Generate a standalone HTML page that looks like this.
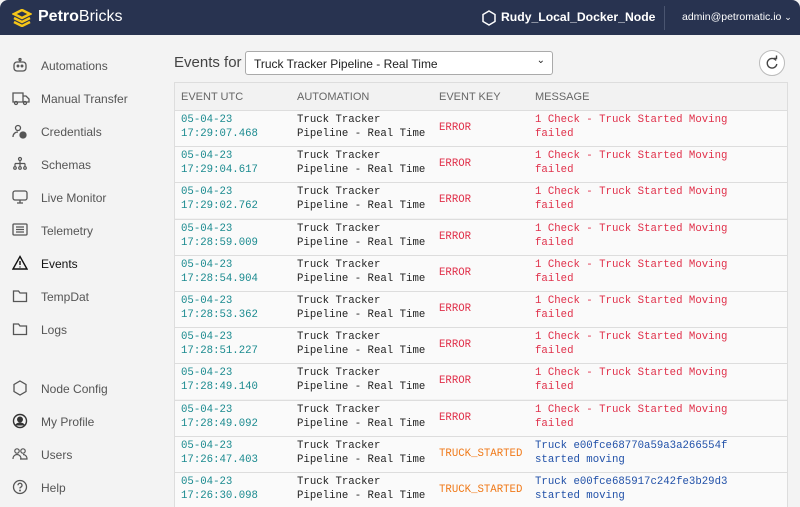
<!DOCTYPE html><html><head><style>
*{margin:0;padding:0;box-sizing:border-box}
html,body{width:800px;height:507px;overflow:hidden}
body{background:#f3f3f3;font-family:"Liberation Sans",sans-serif;position:relative}
.top{position:absolute;left:0;top:0;width:800px;height:35px;background:#283350;border-radius:8px 8px 0 0}
.logo{position:absolute;left:38px;top:8px;color:#fff;font-size:16px}
.node{position:absolute;left:501px;top:10px;color:#fff;font-weight:bold;font-size:12.2px}
.sep{position:absolute;left:664px;top:6px;width:1px;height:24px;background:#4a5570}
.admin{position:absolute;left:682px;top:11px;color:#fff;font-size:10.5px}
.nav div{position:absolute;left:41px;font-size:12px;color:#555}
.nav svg{position:absolute;left:-29px;top:-2px}
.ev{position:absolute;left:174px;top:54px;font-size:15px;color:#444}
.sel{position:absolute;left:245px;top:51px;width:308px;height:24px;background:#fff;border:1px solid #aaa;border-radius:3px;font-size:12px;padding:5px 8px;color:#222}
.ref{position:absolute;left:759px;top:50px;width:26px;height:26px;border:1px solid #bbb;border-radius:50%;background:#fff}
.tbl{position:absolute;left:174px;top:82px;width:614px;height:440px;border:1px solid #ddd;background:#f2f2f2}
.hd{position:absolute;top:8px;font-size:11px;color:#666}
.row{position:absolute;left:0;width:612px;height:36px;background:#fafafa;border-top:1px solid #ddd;font-family:"Liberation Mono",monospace;font-size:10.7px;line-height:13.5px}
.row div{position:absolute;top:3px}
.t{left:6px;color:#1a8a8f}.a{left:122px;color:#222}.k{left:264px;top:11px!important}.m{left:360px}
.er{color:#e0304a}.tr{color:#f07a1a}.bl{color:#2050a8}
</style></head><body>
<div class="top">
<svg style="position:absolute;left:12px;top:9px" width="20" height="18" viewBox="0 0 20 18"><path d="M10 1 L18 5 L10 9 L2 5Z" fill="none" stroke="#f5c518" stroke-width="2.5"/><path d="M2 9 L10 13 L18 9 M2 13 L10 17 L18 13" fill="none" stroke="#f5c518" stroke-width="2.5"/></svg>
<div class="logo"><b>Petro</b>Bricks</div>
<svg style="position:absolute;left:482px;top:10px" width="14" height="16" viewBox="0 0 14 16"><path d="M7 1 L13 4.5 V11.5 L7 15 L1 11.5 V4.5Z" fill="none" stroke="#fff" stroke-width="1.5"/></svg>
<div class="node">Rudy_Local_Docker_Node</div><div class="sep"></div>
<div class="admin">admin@petromatic.io <span style="font-size:9px">&#8964;</span></div>
</div>
<div class="nav">
<div style="top:59px"><svg width="16" height="16" viewBox="0 0 16 16" fill="none" stroke="#555" stroke-width="1.3"><rect x="2" y="5" width="12" height="9" rx="3"/><circle cx="8" cy="2.5" r="1"/><line x1="8" y1="3.5" x2="8" y2="5"/><circle cx="6" cy="9" r=".8"/><circle cx="10" cy="9" r=".8"/></svg>Automations</div>
<div style="top:92px"><svg width="18" height="16" viewBox="0 0 18 16" fill="none" stroke="#555" stroke-width="1.3"><path d="M1 3h10v9H1z M11 6h3l3 3v3h-6"/><circle cx="4" cy="13" r="1.5"/><circle cx="13" cy="13" r="1.5"/></svg>Manual Transfer</div>
<div style="top:125px"><svg width="16" height="16" viewBox="0 0 16 16" fill="none" stroke="#555" stroke-width="1.3"><circle cx="6" cy="5" r="2.5"/><path d="M1 14c0-3 2-5 5-5"/><circle cx="11" cy="12" r="3" fill="#555"/></svg>Credentials</div>
<div style="top:158px"><svg width="16" height="16" viewBox="0 0 16 16" fill="none" stroke="#555" stroke-width="1.2"><circle cx="8" cy="3" r="1.5"/><path d="M8 4.5v3M3 7.5h10M3 7.5v3M8 7.5v3M13 7.5v3"/><circle cx="3" cy="12" r="1.3"/><circle cx="8" cy="12" r="1.3"/><circle cx="13" cy="12" r="1.3"/></svg>Schemas</div>
<div style="top:191px"><svg width="16" height="16" viewBox="0 0 16 16" fill="none" stroke="#555" stroke-width="1.3"><rect x="1" y="2" width="14" height="9" rx="2"/><path d="M5 14h6M8 11v3"/></svg>Live Monitor</div>
<div style="top:224px"><svg width="16" height="16" viewBox="0 0 16 16" fill="none" stroke="#555" stroke-width="1.3"><rect x="1" y="2" width="14" height="11" rx="1"/><path d="M4 5h8M4 7.5h8M4 10h8"/></svg>Telemetry</div>
<div style="top:257px;color:#111"><svg width="16" height="16" viewBox="0 0 16 16" fill="none" stroke="#111" stroke-width="1.4"><path d="M8 1.5L15 14H1z"/><path d="M8 6v4M8 11.5v1"/></svg>Events</div>
<div style="top:290px"><svg width="16" height="16" viewBox="0 0 16 16" fill="none" stroke="#555" stroke-width="1.3"><path d="M1.5 3h5l1.5 2h6.5v8.5h-13z"/></svg>TempDat</div>
<div style="top:323px"><svg width="16" height="16" viewBox="0 0 16 16" fill="none" stroke="#555" stroke-width="1.3"><path d="M1.5 3h5l1.5 2h6.5v8.5h-13z"/></svg>Logs</div>
<div style="top:382px"><svg width="16" height="16" viewBox="0 0 16 16" fill="none" stroke="#555" stroke-width="1.3"><path d="M8 1L14 4.5V11.5L8 15L2 11.5V4.5Z"/></svg>Node Config</div>
<div style="top:415px"><svg width="16" height="16" viewBox="0 0 16 16" fill="none" stroke="#333" stroke-width="1.4"><circle cx="8" cy="8" r="6.5"/><circle cx="8" cy="6.5" r="2.3" fill="#333"/><path d="M3.5 12.5c2-3 7-3 9 0" fill="#333"/></svg>My Profile</div>
<div style="top:448px"><svg width="16" height="16" viewBox="0 0 16 16" fill="none" stroke="#555" stroke-width="1.2"><circle cx="5" cy="5" r="2.2"/><circle cx="11" cy="5" r="2.2"/><path d="M1 13c0-3 2-4.5 4-4.5s4 1.5 4 4.5M8 13h7c0-3-2-4.5-4-4.5"/></svg>Users</div>
<div style="top:481px"><svg width="16" height="16" viewBox="0 0 16 16" fill="none" stroke="#555" stroke-width="1.3"><circle cx="8" cy="8" r="6.5"/><path d="M6 6.3a2 2 0 1 1 2.5 1.9c-.5.2-.5.6-.5 1.3"/><circle cx="8" cy="11.5" r=".4"/></svg>Help</div>
</div>
<div class="ev">Events for</div>
<div class="sel">Truck Tracker Pipeline - Real Time<span style="position:absolute;right:7px;top:3px;font-size:10px">&#8964;</span></div>
<div class="ref"><svg width="24" height="24" viewBox="0 0 24 24" fill="none" stroke="#444" stroke-width="1.4"><path d="M16 9.5A4.8 4.8 0 1 0 16.8 13"/><path d="M13.5 7.5h3v-3" /></svg></div>
<div class="tbl">
<div class="hd" style="left:6px">EVENT UTC</div><div class="hd" style="left:122px">AUTOMATION</div><div class="hd" style="left:264px">EVENT KEY</div><div class="hd" style="left:360px">MESSAGE</div>
<div class="row" style="top:27px"><div class="t">05-04-23<br>17:29:07.468</div><div class="a">Truck Tracker<br>Pipeline - Real Time</div><div class="k er">ERROR</div><div class="m er">1 Check - Truck Started Moving<br>failed</div></div>
<div class="row" style="top:63px"><div class="t">05-04-23<br>17:29:04.617</div><div class="a">Truck Tracker<br>Pipeline - Real Time</div><div class="k er">ERROR</div><div class="m er">1 Check - Truck Started Moving<br>failed</div></div>
<div class="row" style="top:99px"><div class="t">05-04-23<br>17:29:02.762</div><div class="a">Truck Tracker<br>Pipeline - Real Time</div><div class="k er">ERROR</div><div class="m er">1 Check - Truck Started Moving<br>failed</div></div>
<div class="row" style="top:136px"><div class="t">05-04-23<br>17:28:59.009</div><div class="a">Truck Tracker<br>Pipeline - Real Time</div><div class="k er">ERROR</div><div class="m er">1 Check - Truck Started Moving<br>failed</div></div>
<div class="row" style="top:172px"><div class="t">05-04-23<br>17:28:54.904</div><div class="a">Truck Tracker<br>Pipeline - Real Time</div><div class="k er">ERROR</div><div class="m er">1 Check - Truck Started Moving<br>failed</div></div>
<div class="row" style="top:208px"><div class="t">05-04-23<br>17:28:53.362</div><div class="a">Truck Tracker<br>Pipeline - Real Time</div><div class="k er">ERROR</div><div class="m er">1 Check - Truck Started Moving<br>failed</div></div>
<div class="row" style="top:244px"><div class="t">05-04-23<br>17:28:51.227</div><div class="a">Truck Tracker<br>Pipeline - Real Time</div><div class="k er">ERROR</div><div class="m er">1 Check - Truck Started Moving<br>failed</div></div>
<div class="row" style="top:280px"><div class="t">05-04-23<br>17:28:49.140</div><div class="a">Truck Tracker<br>Pipeline - Real Time</div><div class="k er">ERROR</div><div class="m er">1 Check - Truck Started Moving<br>failed</div></div>
<div class="row" style="top:317px"><div class="t">05-04-23<br>17:28:49.092</div><div class="a">Truck Tracker<br>Pipeline - Real Time</div><div class="k er">ERROR</div><div class="m er">1 Check - Truck Started Moving<br>failed</div></div>
<div class="row" style="top:353px"><div class="t">05-04-23<br>17:26:47.403</div><div class="a">Truck Tracker<br>Pipeline - Real Time</div><div class="k tr">TRUCK_STARTED</div><div class="m bl">Truck e00fce68770a59a3a266554f<br>started moving</div></div>
<div class="row" style="top:389px"><div class="t">05-04-23<br>17:26:30.098</div><div class="a">Truck Tracker<br>Pipeline - Real Time</div><div class="k tr">TRUCK_STARTED</div><div class="m bl">Truck e00fce685917c242fe3b29d3<br>started moving</div></div>
</div>
</body></html>
